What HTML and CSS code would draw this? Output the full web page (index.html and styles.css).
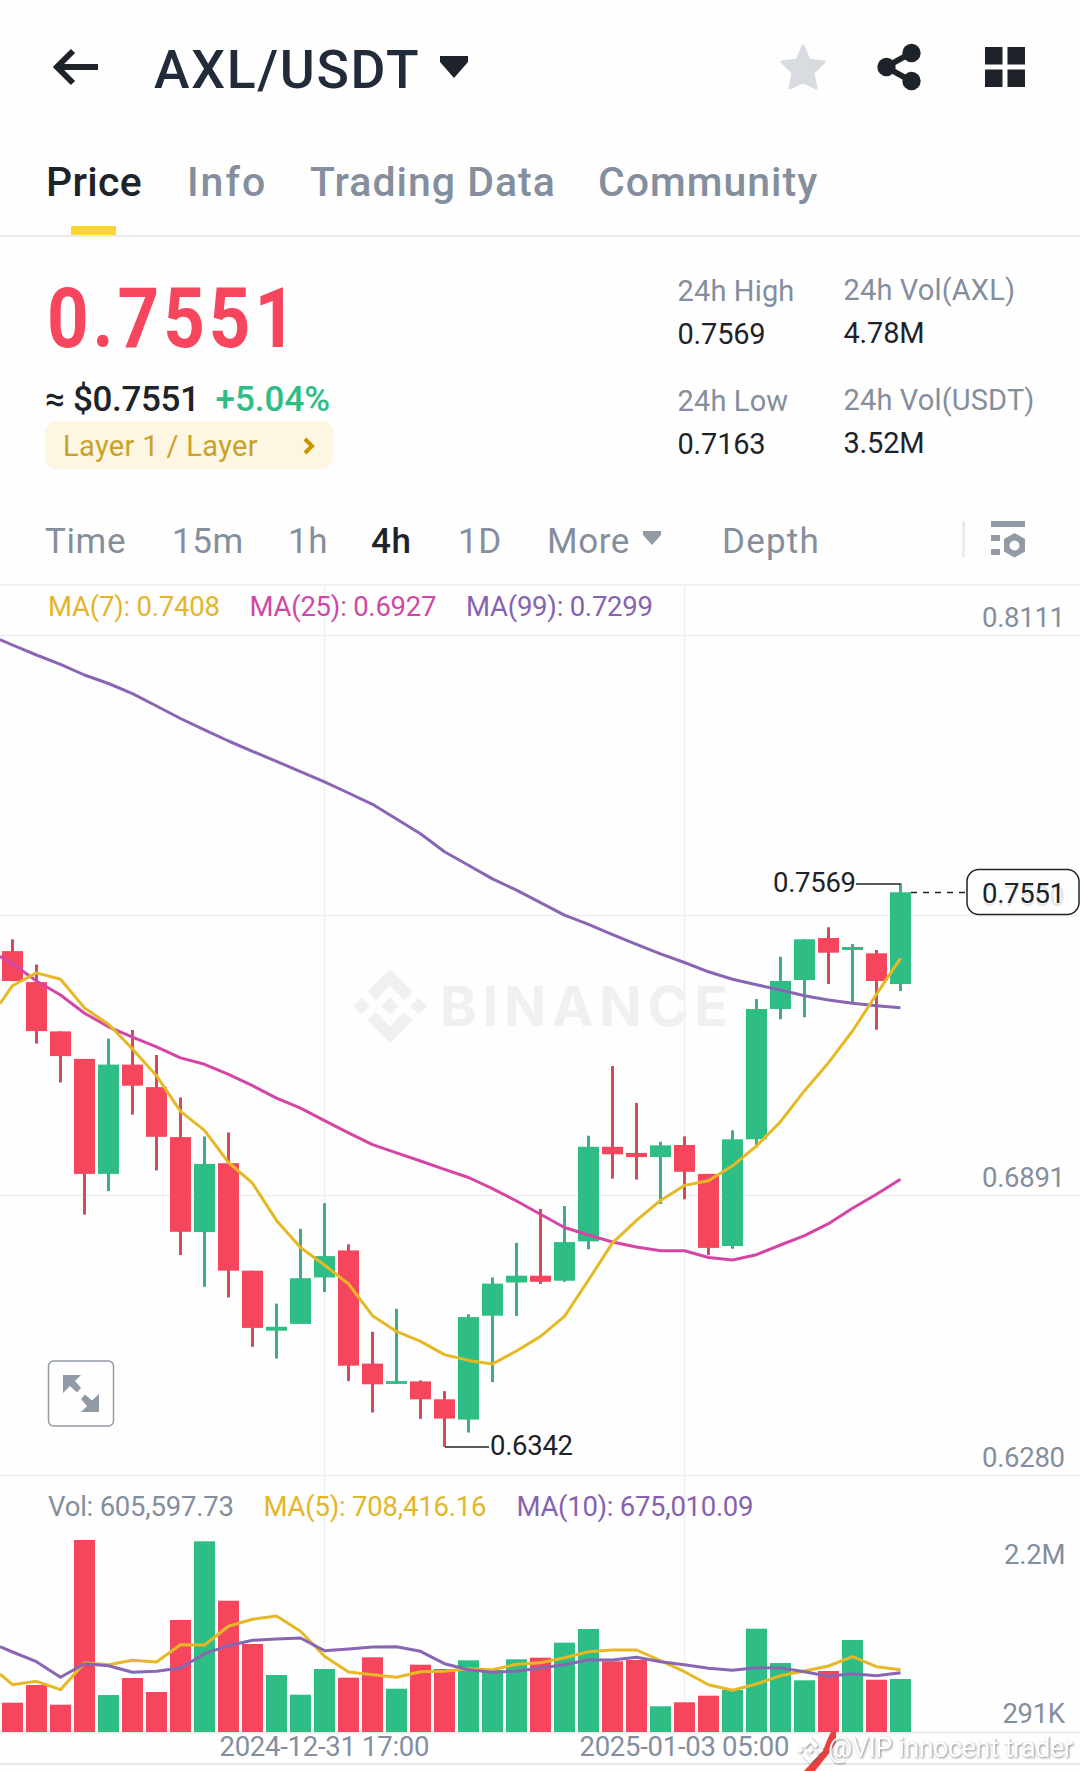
FILE: index.html
```html
<!DOCTYPE html>
<html lang="en">
<head>
    <meta charset="UTF-8">
    <meta name="viewport" content="width=device-width, initial-scale=1.0">
    <title>AXL/USDT</title>
    <link rel="stylesheet" href="styles.css">
</head>
<body>
    <div class="app">
        <header class="header">
            <svg class="back" width="46" height="38" viewBox="0 0 46 38">
                <path d="M45 19H5M20 3L4 19l16 16" fill="none" stroke="#1e2329" stroke-width="6"/>
            </svg>
            <h1>AXL/USDT</h1>
            <svg class="caret" width="28" height="22" viewBox="0 0 28 22">
                <path d="M0 0h28v6L14 22 0 6z" fill="#1e2329"/>
            </svg>
            <div class="actions">
                <svg width="46" height="48" viewBox="0 0 46 48">
                    <path d="M23 3l6 14 15 2-11 11 3 15-13-6-13 6 3-15L2 19l15-2z" fill="#d8dbe0" stroke="#d8dbe0" stroke-width="3" stroke-linejoin="round"/>
                </svg>
                <svg width="44" height="48" viewBox="0 0 44 48">
                    <path d="M34 10L9 24l25 14" fill="none" stroke="#1e2329" stroke-width="6"/>
                    <circle cx="9.5" cy="24" r="9.2" fill="#1e2329"/>
                    <circle cx="34.5" cy="10" r="9.2" fill="#1e2329"/>
                    <circle cx="34.5" cy="38" r="9.2" fill="#1e2329"/>
                </svg>
                <svg width="40" height="40" viewBox="0 0 40 40">
                    <path d="M0 0h17.5v17.5H0zM22.5 0H40v17.5H22.5zM0 22.5h17.5V40H0zM22.5 22.5H40V40H22.5z" fill="#1e2329"/>
                </svg>
            </div>
        </header>

        <nav class="tabs">
            <a class="tab active">Price</a>
            <a class="tab">Info</a>
            <a class="tab">Trading Data</a>
            <a class="tab">Community</a>
        </nav>

        <section class="summary">
            <div class="quote">
                <div class="price">0.7551</div>
                <div class="fiat"><span class="usd">≈ $0.7551</span><span class="change">+5.04%</span></div>
                <div class="tag">
                    <span>Layer 1 / Layer</span>
                    <svg width="12" height="18" viewBox="0 0 12 18">
                        <path d="M2 2l7 7-7 7" fill="none" stroke="#c99400" stroke-width="4"/>
                    </svg>
                </div>
            </div>
            <dl class="stats">
                <div><dt>24h High</dt><dd>0.7569</dd></div>
                <div><dt>24h Low</dt><dd>0.7163</dd></div>
            </dl>
            <dl class="stats volume">
                <div><dt>24h Vol(AXL)</dt><dd>4.78M</dd></div>
                <div><dt>24h Vol(USDT)</dt><dd>3.52M</dd></div>
            </dl>
        </section>

        <nav class="intervals">
            <a>Time</a>
            <a>15m</a>
            <a>1h</a>
            <a class="active">4h</a>
            <a>1D</a>
            <a class="more">More
                <svg width="18" height="14" viewBox="0 0 18 14"><path d="M0 0h18v4L9 14 0 4z" fill="#929aa5"/></svg>
            </a>
            <a class="depth">Depth</a>
            <svg class="settings" width="34" height="37" viewBox="0 0 34 37">
                <path d="M0 0h34v6H0zM0 14h9v6H0zM0 28h9v6H0z" fill="#929aa5"/>
                <path fill-rule="evenodd" d="M23.5 12L34 18v12.5l-10.5 6L13 30.5V18zM23.5 19.5a5 5 0 1 0 .01 0z" fill="#929aa5"/>
            </svg>
        </nav>

        <svg class="chart" id="chart" width="1080" height="1185" viewBox="0 586 1080 1185">
            <g class="grid">
                <path d="M0 635.5H1080M0 915.5H1080M0 1195.5H1080M0 1475.5H1080M324.5 586V1732M684.5 586V1732"/>
                <path class="axis" d="M0 1732.5H1080M0 1764H1080"/>
            </g>

            <g class="watermark">
                <path transform="translate(353 969) scale(.5845)" d="M38.73 53.2l24.59-24.58 24.6 24.6 14.3-14.31L63.32 0 24.42 38.9zM0 63.31L14.3 49 28.61 63.31 14.3 77.61zM38.73 73.41L63.32 98l24.6-24.6 14.31 14.29-38.91 38.91-38.9-38.88zM98 63.31L112.3 49l14.31 14.3-14.31 14.32zM77.83 63.3L63.32 48.78 48.81 63.28l14.51 14.5z"/>
                <text x="440" y="1026" textLength="288">BINANCE</text>
            </g>

            <g id="candles"></g>
            <g id="volumes"></g>
            <g id="lines"></g>

            <g class="legend">
                <text class="ma-yellow" x="48" y="616" textLength="172">MA(7): 0.7408</text>
                <text class="ma-pink" x="249.5" y="616" textLength="187">MA(25): 0.6927</text>
                <text class="ma-purple" x="466" y="616" textLength="187">MA(99): 0.7299</text>
                <text x="48" y="1516" textLength="186">Vol: 605,597.73</text>
                <text class="ma-yellow" x="263.5" y="1516" textLength="223">MA(5): 708,416.16</text>
                <text class="ma-purple" x="516.5" y="1516" textLength="237">MA(10): 675,010.09</text>
            </g>

            <g class="labels">
                <text x="982" y="627" textLength="83">0.8111</text>
                <text x="982" y="1187" textLength="83">0.6891</text>
                <text x="982" y="1467" textLength="83">0.6280</text>
                <text x="1004" y="1564" textLength="61.5">2.2M</text>
                <text x="1002.5" y="1723" textLength="62.5">291K</text>
                <text x="219.5" y="1756" textLength="210">2024-12-31 17:00</text>
                <text x="579.5" y="1756" textLength="210">2025-01-03 05:00</text>
            </g>

            <g class="marks">
                <path d="M856 884H900.5M445 1447H489"/>
                <path d="M911 892.5H966" stroke-dasharray="6 6"/>
                <rect x="967" y="869.5" width="112" height="45" rx="12"/>
                <text class="ghost" x="982" y="906" textLength="83">0.7500</text>
                <text x="982" y="903" textLength="83">0.7551</text>
                <text x="773" y="892" textLength="83">0.7569</text>
                <text x="490" y="1455" textLength="83">0.6342</text>
            </g>

            <g class="expand">
                <rect x="48.5" y="1361" width="65" height="65" rx="5"/>
                <path d="M63 1375h18l-6 6 6 7-4 4.5-7-6.5-7 7zM99 1412H81l6-6-6-7 4-4.5 7 6 7-6.5z"/>
            </g>

            <path class="scribble" d="M828 1738l3-6h5v10l-6 10-15 19h-11l14-15 6-8z"/>

            <g class="signature">
                <path transform="translate(797 1737) scale(.21)" d="M38.73 53.2l24.59-24.58 24.6 24.6 14.3-14.31L63.32 0 24.42 38.9zM0 63.31L14.3 49 28.61 63.31 14.3 77.61zM38.73 73.41L63.32 98l24.6-24.6 14.31 14.29-38.91 38.91-38.9-38.88zM98 63.31L112.3 49l14.31 14.3-14.31 14.32zM77.83 63.3L63.32 48.78 48.81 63.28l14.51 14.5z"/>
                <text x="828" y="1757" textLength="245">@VIP innocent trader</text>
            </g>
        </svg>
    </div>

    <script src="chart.js"></script>
</body>
</html>
```
FILE: chart.js
```javascript
const STEP = 24;
const FIRST = 12.5;
const BAR_WIDTH = 21;
const VOLUME_BASE = 1732;

// direction, high, body top, body bottom, low, volume top
const candles = [
    ['down', 939.3, 951.1, 981.1, 981.1, 1702.7],
    ['down', 964.6, 982.1, 1031.1, 1043.6, 1685],
    ['down', 1031.4, 1031.4, 1056.1, 1082.5, 1704.7],
    ['down', 1058.9, 1058.9, 1173.9, 1214.6, 1540],
    ['up', 1038.6, 1064.6, 1173.9, 1191.1, 1695],
    ['down', 1030, 1064.6, 1085.7, 1114.6, 1678],
    ['down', 1055, 1087.1, 1136.8, 1170.4, 1692],
    ['down', 1097.5, 1137.1, 1231.8, 1255, 1620],
    ['up', 1136.4, 1163.9, 1232.1, 1286.8, 1541.3],
    ['down', 1132.5, 1163.2, 1270.7, 1297.5, 1600.7],
    ['down', 1270.7, 1270.7, 1327.9, 1346.8, 1644],
    ['up', 1303.6, 1326.8, 1330.7, 1358.6, 1675],
    ['up', 1228.9, 1278.2, 1323.9, 1323.9, 1694.7],
    ['up', 1203.2, 1256.1, 1277.5, 1292.1, 1669],
    ['down', 1244.3, 1250.4, 1365.7, 1381.1, 1677.7],
    ['down', 1331.8, 1363.6, 1384.3, 1412.5, 1657.3],
    ['up', 1308.9, 1381.1, 1383.9, 1383.9, 1688.7],
    ['down', 1380.4, 1381.4, 1399.3, 1418.9, 1664.7],
    ['down', 1391.1, 1399.3, 1418.6, 1446.8, 1669],
    ['up', 1314.3, 1317.1, 1419.6, 1432.5, 1660.3],
    ['up', 1277.5, 1283.6, 1315.7, 1382.1, 1670],
    ['up', 1242.9, 1275.7, 1282.5, 1316.1, 1659.3],
    ['down', 1208.9, 1275.7, 1281.8, 1283.9, 1657.7],
    ['up', 1206.1, 1242.1, 1280.7, 1281.8, 1642.7],
    ['up', 1135.7, 1146.8, 1241.4, 1249.3, 1629],
    ['down', 1066.1, 1146.8, 1154.3, 1178.6, 1661.3],
    ['down', 1102.9, 1152.9, 1157.1, 1179.6, 1660],
    ['up', 1141.8, 1145.4, 1157.1, 1203.9, 1706.3],
    ['down', 1136.4, 1145, 1171.8, 1199.3, 1702.3],
    ['down', 1173.9, 1173.9, 1247.9, 1255, 1695.7],
    ['up', 1130.3, 1139.3, 1246, 1248.7, 1690],
    ['up', 999, 1009, 1139.3, 1147.3, 1628.7],
    ['up', 956.7, 981, 1009, 1019.3, 1663],
    ['up', 939.3, 939.3, 980, 1017.3, 1680.3],
    ['down', 927.3, 938, 952.7, 984, 1671],
    ['up', 944, 947, 950, 1004, 1640],
    ['down', 950, 953.3, 981, 1029.7, 1679.7],
    ['up', 883.3, 892.3, 984, 991, 1679]
];

// moving averages: the first value sits on the left edge, the rest on candle centers
const averages = [
    ['ma-purple', [639.5, 645, 655, 664.3, 675, 683.5, 693.6, 706, 718.5, 729.8, 741, 751.3, 761.4, 771.6, 781.8, 793, 804.3, 819, 833.7, 851.8, 865.3, 878.9, 890.2, 902.6, 915.2, 924.3, 934.6, 944.3, 953.9, 962.5, 971.8, 979.3, 984.7, 990, 995.7, 1000, 1003.3, 1005.7, 1007.7]],
    ['ma-pink', [956.4, 963.6, 981, 995, 1013.2, 1026.8, 1037.1, 1046.8, 1057.9, 1064.3, 1074.3, 1085.7, 1098.2, 1108.2, 1120.7, 1132.9, 1144.6, 1152.9, 1161, 1169.3, 1177.5, 1188.6, 1201, 1214.3, 1227.5, 1235, 1242, 1247, 1250.7, 1250.7, 1257.5, 1260, 1254.7, 1245, 1235.7, 1223.7, 1208.3, 1194.3, 1179.3]],
    ['ma-yellow', [1003.6, 985.7, 972.9, 979.3, 1007.9, 1024.3, 1048.9, 1075.7, 1111.4, 1130.4, 1162.5, 1183.2, 1220.4, 1247.5, 1265, 1283.9, 1315.7, 1331.4, 1341.4, 1354.6, 1360.4, 1363.9, 1351, 1336.4, 1316.4, 1280, 1242.9, 1220.4, 1200.4, 1185.4, 1180.7, 1165.8, 1146, 1121.7, 1090.7, 1062.7, 1031, 994.3, 958.3]],
    ['ma-yellow', [1674, 1684.7, 1681.3, 1689.7, 1662.7, 1664.7, 1660.3, 1662, 1644.7, 1645, 1626.3, 1619.3, 1616, 1631.3, 1656.3, 1672, 1674.7, 1677.3, 1671.7, 1671.3, 1668.7, 1669.7, 1664.3, 1662.7, 1657.7, 1651.7, 1650, 1650, 1660.7, 1671.7, 1684.7, 1690.3, 1684, 1675.7, 1671, 1666, 1656.7, 1666.7, 1669.7]],
    ['ma-purple', [1646.7, 1652, 1661.7, 1677.3, 1663.7, 1665.7, 1672.3, 1671.3, 1668, 1653.7, 1645.7, 1640.3, 1639, 1638, 1650.7, 1649, 1647, 1646.7, 1651.3, 1663.7, 1669.7, 1672.3, 1671.3, 1668, 1664.7, 1659.7, 1660, 1657.3, 1661.7, 1664.7, 1668.3, 1670.3, 1667.7, 1668, 1671.7, 1676.3, 1673.7, 1675.7, 1672.7]]
];

function add(parentId, tag, attrs) {
    const el = document.createElementNS('http://www.w3.org/2000/svg', tag);
    for (const key in attrs) {
        el.setAttribute(key, attrs[key]);
    }
    document.getElementById(parentId).appendChild(el);
}

candles.forEach(([dir, high, top, bottom, low, vol], i) => {
    const x = FIRST + i * STEP;
    const left = x - BAR_WIDTH / 2;
    add('candles', 'rect', { class: 'wick ' + dir, x: x - 1.5, y: high, width: 3, height: low - high });
    add('candles', 'rect', { class: dir, x: left, y: top, width: BAR_WIDTH, height: bottom - top });
    add('volumes', 'rect', { class: dir, x: left, y: vol, width: BAR_WIDTH, height: VOLUME_BASE - vol });
});

averages.forEach(([name, values]) => {
    const points = values.map((y, i) => (i === 0 ? 0 : FIRST + (i - 1) * STEP) + ',' + y);
    add('lines', 'polyline', { class: 'ma ' + name, points: points.join(' ') });
});
```
FILE: styles.css
```css
* {
    margin: 0;
    padding: 0;
    box-sizing: border-box;
}

body {
    font-family: Roboto, 'Liberation Sans', sans-serif;
    background: #fefefe;
    color: #1e2329;
}

svg {
    display: block;
}

.app {
    width: 1080px;
    height: 1771px;
    overflow: hidden;
}

.header {
    display: flex;
    align-items: center;
    height: 134px;
    padding: 0 55px 0 53px;
}

.header h1 {
    margin-left: 55px;
    padding-top: 5px;
    font-size: 53.5px;
    font-weight: 500;
    line-height: 60px;
    letter-spacing: 1.7px;
    color: #222b3a;
    width: 265px;
    white-space: nowrap;
}

.caret {
    margin-left: 21px;
}

.actions {
    display: flex;
    align-items: center;
    margin-left: auto;
}

.actions svg + svg {
    margin-left: 51px;
}

.actions svg:last-child {
    margin-left: 64px;
}

.tabs {
    display: grid;
    grid-template-columns: 140px 124px 288px auto;
    height: 103px;
    padding-left: 46px;
    border-bottom: 2px solid #eaeaec;
}

.tab {
    position: relative;
    font-size: 41px;
    font-weight: 500;
    line-height: 96px;
    letter-spacing: 1px;
    color: #848e9c;
}

.tab:nth-child(2) {
    padding-left: 1px;
    letter-spacing: 2px;
}

.tab.active {
    color: #1e2329;
    letter-spacing: 0.3px;
}

.tab.active::after {
    content: '';
    position: absolute;
    left: 25px;
    bottom: 0;
    width: 45px;
    height: 9px;
    background: #fcd535;
}

.summary {
    display: flex;
    height: 247px;
    padding-left: 45px;
}

.quote {
    width: 632.5px;
    padding-top: 42px;
}

.price {
    width: 300px;
    margin-left: 2px;
    font-size: 83px;
    font-weight: 700;
    line-height: 80px;
    letter-spacing: 4.5px;
    color: #f6465d;
    transform: scaleX(0.875);
    transform-origin: left;
}

.fiat {
    display: flex;
    margin-top: 19px;
    font-size: 35px;
    font-weight: 500;
    line-height: 44px;
}

.usd {
    width: 170.5px;
    letter-spacing: -0.35px;
}

.change {
    color: #2ebd85;
    letter-spacing: 0;
}

.tag {
    display: flex;
    align-items: center;
    justify-content: space-between;
    width: 288px;
    height: 48px;
    margin-top: -1px;
    padding: 1px 18px 0 18px;
    border-radius: 12px;
    background: #fdf6e3;
    color: #c9a227;
    font-size: 29px;
    letter-spacing: 0.35px;
}

.stats {
    width: 166px;
    padding-top: 32.5px;
    font-size: 29px;
    line-height: 43px;
    white-space: nowrap;
}

.stats.volume {
    padding-top: 31.5px;
}

.stats div {
    margin-bottom: 24px;
}

.stats dt {
    color: #848e9c;
    letter-spacing: 0.15px;
}

.stats dd {
    letter-spacing: -0.2px;
}

.intervals {
    display: grid;
    grid-template-columns: 127px 116px 82px 88px 89px 174px 244px auto;
    align-items: center;
    height: 102px;
    padding: 14px 0 0 45px;
    border-bottom: 2px solid #f0f1f2;
    font-size: 35px;
    letter-spacing: 0.6px;
    color: #848e9c;
}

.intervals .active {
    padding-left: 1px;
    font-weight: 500;
    color: #1e2329;
}

.more {
    display: flex;
    align-items: center;
}

.more svg {
    margin: -6px 0 0 13px;
}

.depth {
    height: 36px;
    margin-top: -5px;
    padding-left: 1px;
    border-right: 3px solid #eaecef;
    line-height: 41px;
    letter-spacing: 1.2px;
}

.settings {
    margin: -4px 0 0 26px;
}

.grid path {
    stroke: #edeff1;
    stroke-width: 1.5;
}

.grid .axis {
    stroke: #e6e8ec;
    stroke-width: 2;
}

.up {
    fill: #2ebd85;
}

.down {
    fill: #f6465d;
}

.wick.up {
    fill: #41ac80;
}

.wick.down {
    fill: #d14a5e;
}

.ma {
    fill: none;
    stroke-width: 3;
    stroke-linejoin: round;
}

.ma.ma-yellow {
    stroke: #e6b924;
}

.ma.ma-pink {
    stroke: #d545a6;
}

.ma.ma-purple {
    stroke: #8866b4;
}

.legend text,
.labels text,
.marks text {
    font-size: 27.5px;
    fill: #848e9c;
}

.legend .ma-yellow {
    fill: #e3b62a;
}

.legend .ma-pink {
    fill: #cf48a5;
}

.legend .ma-purple {
    fill: #8662b0;
}

.marks path,
.marks rect {
    fill: #fefefe;
    stroke: #1e2329;
    stroke-width: 1.5;
}

.marks text {
    fill: #1e2329;
}

.marks .ghost {
    fill: #e4e7ea;
}

.watermark {
    fill: #eff0f0;
}

.watermark text {
    font-family: Inter, sans-serif;
    font-size: 55.5px;
    font-weight: 700;
}

.expand rect {
    fill: #fefefe;
    stroke: #929aa5;
    stroke-width: 1.5;
}

.expand path {
    fill: #929aa5;
}

.scribble {
    fill: #ec3f3c;
}

.signature {
    fill: #ffffff;
    filter: drop-shadow(1px 1px 1px rgba(90, 95, 100, 0.7));
}

.signature text {
    font-size: 27px;
}
```
